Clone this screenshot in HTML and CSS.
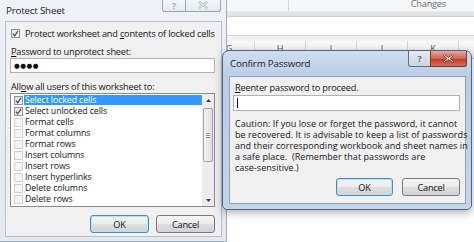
FILE: index.html
```html
<!DOCTYPE html>
<html lang="en">
<head>
    <meta charset="UTF-8">
    <title>Protect Sheet</title>
    <link rel="stylesheet" href="styles.css">
</head>
<body>
<div class="screen">

    <!-- Excel window in the background -->
    <div class="excel">
        <div class="ribbon">
            <div class="ribbon-group"></div>
            <div class="ribbon-group last"><span class="group-label">Changes</span></div>
        </div>
        <div class="ribbon-foot"></div>
        <div class="formula-bar"></div>
        <div class="corner-band"></div>
        <div class="col-heads">
            <span></span><span></span><span></span><span></span>
            <span>G</span><span>H</span><span>I</span><span>J</span><span>K</span>
            <span class="rest"></span>
        </div>
    </div>

    <!-- Protect Sheet dialog (inactive) -->
    <div class="window protect">
        <div class="titlebar">
            <span class="title">Protect Sheet</span>
            <div class="caption-buttons">
                <span class="cap-btn help">?</span>
                <span class="cap-btn close">
                    <svg width="10" height="8" viewBox="0 0 10 8"><path d="M1.5 0.5 L5 3 L8.5 0.5 L9.5 1.5 L6.3 4 L9.5 6.5 L8.5 7.5 L5 5 L1.5 7.5 L0.5 6.5 L3.7 4 L0.5 1.5 Z" fill="#eef0f2" stroke="#a9adb3" stroke-width="0.8"/></svg>
                </span>
            </div>
        </div>
        <div class="client">
            <div class="check-row">
                <span class="box on">
                    <svg width="7" height="7" viewBox="0 0 7 7"><path d="M1 3.6 L2.7 5.8 L6 0.8" stroke="#3d5572" stroke-width="1.3" fill="none"/></svg>
                </span>
                <span>Protect worksheet and <u>c</u>ontents of locked cells</span>
            </div>
            <div class="field-label"><u>P</u>assword to unprotect sheet:</div>
            <div class="textbox password"><span class="dots">●●●●</span></div>
            <div class="field-label allow">All<u>o</u>w all users of this worksheet to:</div>
            <div class="listbox">
                <div class="list-items">
                    <div class="list-item"><span class="box on"><svg width="7" height="7" viewBox="0 0 7 7"><path d="M1 3.6 L2.7 5.8 L6 0.8" stroke="#3d5572" stroke-width="1.3" fill="none"/></svg></span><span class="item-text selected">Select locked cells</span></div>
                    <div class="list-item"><span class="box on"><svg width="7" height="7" viewBox="0 0 7 7"><path d="M1 3.6 L2.7 5.8 L6 0.8" stroke="#3d5572" stroke-width="1.3" fill="none"/></svg></span><span class="item-text">Select unlocked cells</span></div>
                    <div class="list-item"><span class="box"></span><span class="item-text">Format cells</span></div>
                    <div class="list-item"><span class="box"></span><span class="item-text">Format columns</span></div>
                    <div class="list-item"><span class="box"></span><span class="item-text">Format rows</span></div>
                    <div class="list-item"><span class="box"></span><span class="item-text">Insert columns</span></div>
                    <div class="list-item"><span class="box"></span><span class="item-text">Insert rows</span></div>
                    <div class="list-item"><span class="box"></span><span class="item-text">Insert hyperlinks</span></div>
                    <div class="list-item"><span class="box"></span><span class="item-text">Delete columns</span></div>
                    <div class="list-item"><span class="box"></span><span class="item-text">Delete rows</span></div>
                </div>
                <div class="scrollbar">
                    <span class="arrow"><svg width="5" height="3" viewBox="0 0 5 3"><path d="M0 3 L2.5 0 L5 3 Z" fill="#3a3a3a"/></svg></span>
                    <span class="thumb"><span class="grip"></span></span>
                    <span class="track"></span>
                    <span class="arrow"><svg width="5" height="3" viewBox="0 0 5 3"><path d="M0 0 L2.5 3 L5 0 Z" fill="#3a3a3a"/></svg></span>
                </div>
            </div>
            <div class="button-row">
                <button class="btn default">OK</button>
                <button class="btn">Cancel</button>
            </div>
        </div>
    </div>

    <!-- Confirm Password dialog (active) -->
    <div class="window confirm">
        <div class="titlebar">
            <span class="title">Confirm Password</span>
            <div class="caption-buttons">
                <span class="cap-btn help">?</span>
                <span class="cap-btn close">
                    <svg width="11" height="9" viewBox="0 0 10 8"><path d="M1.5 0.5 L5 3 L8.5 0.5 L9.5 1.5 L6.3 4 L9.5 6.5 L8.5 7.5 L5 5 L1.5 7.5 L0.5 6.5 L3.7 4 L0.5 1.5 Z" fill="#ffffff" stroke="#7a2a1e" stroke-width="0.8"/></svg>
                </span>
            </div>
        </div>
        <div class="client">
            <div class="field-label first"><u>R</u>eenter password to proceed.</div>
            <div class="textbox reenter"><span class="caret"></span></div>
            <div class="caution">
                <span class="line">Caution: If you lose or forget the password, it cannot</span>
                <span class="line">be recovered. It is advisable to keep a list of passwords</span>
                <span class="line">and their corresponding workbook and sheet names in</span>
                <span class="line">a safe place.&nbsp; (Remember that passwords are</span>
                <span class="line">case-sensitive.)</span>
            </div>
            <div class="button-row">
                <button class="btn default">OK</button>
                <button class="btn">Cancel</button>
            </div>
        </div>
    </div>

</div>
</body>
</html>
```

FILE: styles.css
```css
* {
    margin: 0;
    padding: 0;
    box-sizing: border-box;
}

body {
    width: 474px;
    height: 242px;
    overflow: hidden;
    background-color: #fff;
    font-family: "Open Sans", "Noto Sans", sans-serif;
    font-size: 9.2px;
    letter-spacing: -0.2px;
    color: #141414;
}

.screen {
    position: relative;
    width: 474px;
    height: 242px;
    overflow: hidden;
}

/* Background spreadsheet */
.ribbon {
    display: flex;
    height: 11px;
    background-color: #f6f7f8;
    overflow: hidden;
}

.ribbon-group {
    width: 289px;
    border-right: 1px solid #d3d7dc;
}

.ribbon-group.last {
    flex: 1;
    border-right: none;
    text-align: right;
    padding-right: 28px;
}

.group-label {
    display: block;
    margin-top: -2px;
    color: #6b6b6b;
    line-height: 12px;
}

.ribbon-foot {
    height: 6px;
    background: linear-gradient(#e8eaed, #dcdfe3);
    border-bottom: 1px solid #cdd1d6;
}

.formula-bar {
    height: 19px;
    background-color: #fff;
    border-bottom: 1px solid #d6d6d6;
}

.corner-band {
    height: 5px;
    background-color: #f3f3f3;
}

.col-heads {
    display: flex;
    height: 18px;
    background: linear-gradient(#f9f9f9, #eaeaea);
    border-bottom: 1px solid #c5c5c5;
}

.col-heads span {
    flex: none;
    width: 51px;
    text-align: center;
    line-height: 16px;
    color: #555;
    border-right: 1px solid #d0d4da;
}

.col-heads .rest {
    flex: 1;
    border-right: none;
}

/* Dialog windows */
.window {
    position: absolute;
    display: flex;
    flex-direction: column;
}

.titlebar {
    display: flex;
    align-items: center;
    flex: none;
}

.title {
    font-size: 9.8px;
    color: #1b1b1b;
}

.caption-buttons {
    display: flex;
    margin-left: auto;
    align-self: flex-start;
}

.cap-btn {
    display: flex;
    align-items: center;
    justify-content: center;
    border: 1px solid #9ca6b2;
    border-top: none;
}

.cap-btn.help {
    border-radius: 0 0 0 3px;
    border-right: none;
    font-weight: bold;
    font-size: 9px;
}

.cap-btn.close {
    border-radius: 0 0 3px 0;
}

.client {
    flex: 1;
    display: flex;
    flex-direction: column;
    background-color: #f0f0f0;
}

/* Protect Sheet */
.protect {
    left: -3px;
    top: -2px;
    width: 230px;
    height: 244px;
    background: linear-gradient(#eef2f6, #e3e8ee);
    border: 1px solid #a3acb7;
}

.protect .titlebar {
    height: 22px;
    padding: 0 5px 0 8px;
}

.protect .cap-btn {
    height: 13px;
    background: linear-gradient(#f6f8fa, #e6eaef);
}

.protect .cap-btn.help {
    width: 23px;
    color: #a6acb4;
}

.protect .cap-btn.close {
    width: 36px;
}

.protect .client {
    margin: 0 4px 4px 7px;
    border: 1px solid #b7c1cc;
    padding: 0 6px 0 4px;
}

.check-row {
    display: flex;
    align-items: center;
    height: 11px;
    margin-top: 6px;
    padding-left: 1px;
    gap: 5px;
}

.box {
    flex: none;
    width: 9px;
    height: 9px;
    display: flex;
    align-items: center;
    justify-content: center;
    border: 1px solid #cfd1d4;
    background-color: #f5f5f5;
}

.box.on {
    border-color: #8f9296;
    background: linear-gradient(135deg, #dcdee1, #fbfbfb);
}

.field-label {
    height: 11px;
    line-height: 11px;
    margin-top: 7px;
    padding-left: 1px;
}

.field-label.allow {
    margin-top: 8px;
}

.textbox {
    display: flex;
    align-items: center;
    background-color: #fff;
    border: 1px solid #adb2b8;
}

.password {
    height: 15px;
    margin-top: 1px;
    padding-left: 3px;
}

.dots {
    font-family: "DejaVu Sans", sans-serif;
    font-size: 6.6px;
    letter-spacing: 0.5px;
    color: #111;
}

.listbox {
    display: flex;
    height: 114px;
    margin-top: 1px;
    border: 1px solid #868b93;
    background-color: #fff;
}

.list-items {
    flex: 1;
    padding: 1px 0 0 3px;
    font-size: 8.8px;
    letter-spacing: -0.1px;
}

.list-item {
    display: flex;
    align-items: center;
    height: 11px;
}

.item-text {
    flex: 1;
    height: 11px;
    line-height: 11px;
    margin-left: 1px;
    padding-left: 1px;
}

/* highlight is one pixel shorter than the row */
.item-text.selected {
    background: linear-gradient(#3399ff, #3399ff) no-repeat 0 0 / 100% 10px;
    color: #fff;
}

.scrollbar {
    flex: none;
    width: 12px;
    display: flex;
    flex-direction: column;
    align-items: center;
    background-color: #ececec;
}

.arrow {
    height: 12px;
    display: flex;
    align-items: center;
}

.thumb {
    width: 10px;
    height: 54px;
    margin-top: 2px;
    display: flex;
    align-items: center;
    justify-content: center;
    border: 1px solid #a2a2a2;
    border-radius: 2px;
    background: linear-gradient(90deg, #f5f5f5, #dedede);
}

.grip {
    width: 4px;
    height: 5px;
    border-top: 1px solid #8d8d8d;
    border-bottom: 1px solid #8d8d8d;
    background: linear-gradient(#f5f5f5 1px, #8d8d8d 1px, #8d8d8d 2px, #f5f5f5 2px);
}

.track {
    flex: 1;
}

.button-row {
    display: flex;
    justify-content: flex-end;
    gap: 7px;
    margin-top: 8px;
}

.btn {
    width: 59px;
    height: 18px;
    font: inherit;
    letter-spacing: inherit;
    color: #141414;
    border: 1px solid #7a7a7a;
    border-radius: 3px;
    background: linear-gradient(#f4f4f4 0%, #ececec 50%, #dfdfdf 50%, #d2d2d2 100%);
}

.btn.default {
    border-color: #4a8cc0;
    box-shadow: inset 0 0 0 1px #b6e0f7;
}

/* Confirm Password */
.confirm {
    left: 222px;
    top: 50px;
    width: 250px;
    height: 160px;
    border: 1px solid #52657b;
    border-radius: 7px 7px 5px 5px;
    background: linear-gradient(#cfdeef, #b9cde5 26px, #c4d5ea);
    box-shadow: 0 3px 8px rgba(0, 0, 0, 0.3);
}

.confirm .titlebar {
    height: 25px;
    padding: 0 4px 0 7px;
}

.confirm .cap-btn {
    height: 16px;
    border-color: #5f6f83;
}

.confirm .cap-btn.help {
    width: 22px;
    color: #5c6b7d;
    background: linear-gradient(#e4ebf3, #c9d5e3);
}

.confirm .cap-btn.close {
    width: 37px;
    background: linear-gradient(#eaa99a, #d0624f 50%, #bf3c27 51%, #d0705a);
    border-color: #7c3a2f;
}

.confirm .client {
    margin: 0 5px 5px 6px;
    border: 1px solid #8fa1b6;
    padding: 5px 5px 7px 5px;
}

.field-label.first {
    margin-top: 0;
    padding-left: 0;
}

.reenter {
    height: 16px;
    margin: 2px 0 0 -2px;
    padding-left: 3px;
}

.caret {
    width: 1px;
    height: 10px;
    background-color: #111;
}

.caution {
    margin-top: 7px;
    font-size: 9px;
    letter-spacing: 0.05px;
    white-space: nowrap;
}

.caution .line {
    display: block;
    height: 11px;
    line-height: 11px;
}

.confirm .button-row {
    gap: 9px;
    margin-top: auto;
}

.confirm .btn {
    width: 58px;
}

.confirm .btn.default {
    width: 57px;
}
```
